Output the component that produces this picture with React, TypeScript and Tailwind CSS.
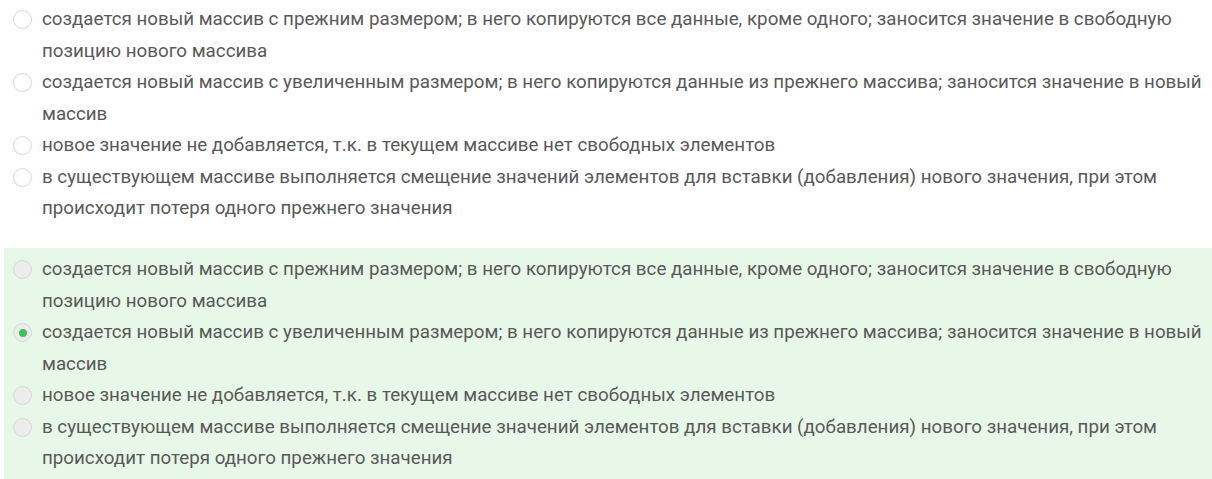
import React from "react";

const options = [
  "создается новый массив с прежним размером; в него копируются все данные, кроме одного; заносится значение в свободную позицию нового массива",
  "создается новый массив с увеличенным размером; в него копируются данные из прежнего массива; заносится значение в новый массив",
  "новое значение не добавляется, т.к. в текущем массиве нет свободных элементов",
  "в существующем массиве выполняется смещение значений элементов для вставки (добавления) нового значения, при этом происходит потеря одного прежнего значения",
];

function Radio({ checked, filled }: { checked?: boolean; filled?: boolean }) {
  return (
    <span
      className={`mt-[6px] flex h-[19px] w-[19px] shrink-0 items-center justify-center rounded-full border border-[#d6d6d6] ${
        filled ? "bg-[#ececec]" : "bg-white"
      }`}
    >
      {checked && <span className="h-[8px] w-[8px] rounded-full bg-[#3dc257]" />}
    </span>
  );
}

function OptionList({ answered, checkedIndex }: { answered?: boolean; checkedIndex?: number }) {
  return (
    <ul className="flex flex-col">
      {options.map((text, i) => (
        <li key={i} className="flex gap-[10px] pl-[13px]">
          <Radio filled={answered} checked={checkedIndex === i} />
          <span className="leading-[31.5px]">{text}</span>
        </li>
      ))}
    </ul>
  );
}

export default function App() {
  return (
    <div
      className="w-[1212px] bg-white pt-[4px] text-[18.75px] text-[#595959]"
      style={{ fontFamily: "Roboto, 'Noto Sans', sans-serif" }}
    >
      <div>
        <OptionList />
      </div>
      <div className="ml-[4px] mt-[23.5px] bg-[#e8f8e8] pb-[4px] pt-[6px]">
        <div className="-ml-[4px]">
          <OptionList answered checkedIndex={1} />
        </div>
      </div>
    </div>
  );
}
